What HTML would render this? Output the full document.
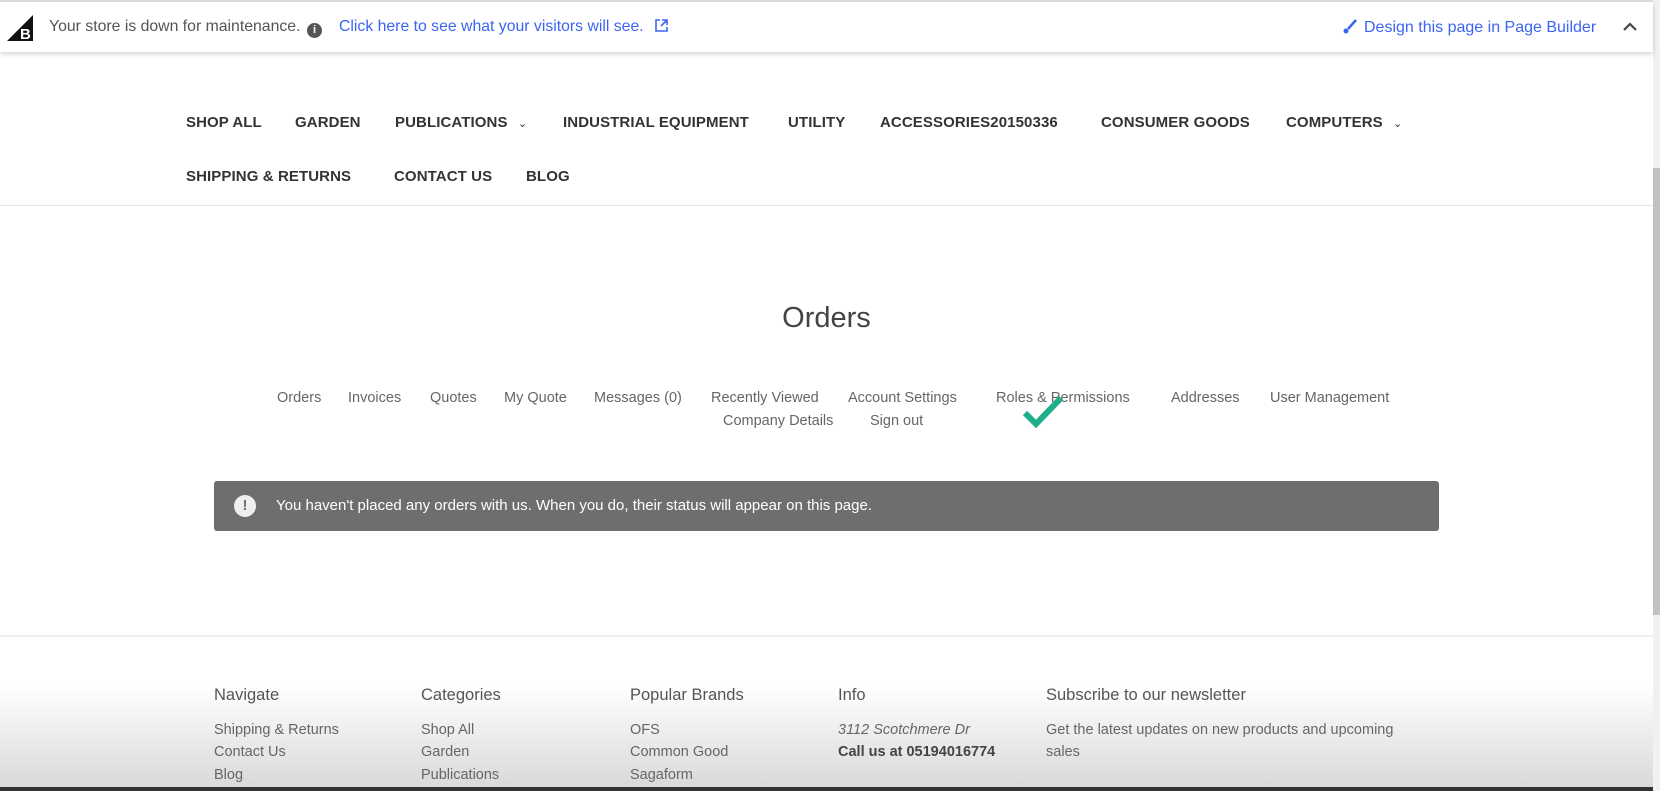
<!DOCTYPE html>
<html><head><meta charset="utf-8"><style>
*{margin:0;padding:0;box-sizing:border-box}
body{width:1660px;height:791px;overflow:hidden;background:#fff;font-family:"Liberation Sans",sans-serif;position:relative}
.a{position:absolute;white-space:nowrap}
.top{position:absolute;left:0;top:2px;width:1653px;height:50px;background:#fff;box-shadow:0 2px 5px rgba(0,0,0,.18)}
.nav{font-weight:bold;font-size:15px;color:#333;letter-spacing:.1px}
.acc{font-size:14.5px;color:#666}
.ft{font-size:16.5px;color:#555}
.fl{font-size:14.5px;color:#666}
</style></head><body>
<div class="a" style="left:0;top:0;width:1660px;height:2px;background:#ddd"></div>
<div class="a" style="left:0;top:636px;width:1653px;height:155px;background:linear-gradient(#fff 0,#fff 50px,#ececec 100px,#d8d8d8 155px)"></div>
<div class="a" style="left:0;top:635px;width:1653px;height:2px;background:#eee"></div>
<div class="a" style="left:1653px;top:0;width:7px;height:791px;background:#f1f1f1"></div>
<div class="a" style="left:1653px;top:168px;width:7px;height:447px;background:#c1c1c1"></div>
<div class="a" style="left:0;top:787px;width:1653px;height:4px;background:#333"></div>
<div class="top">
 <svg class="a" style="left:7px;top:9px" width="30" height="30" viewBox="0 0 30 30"><path d="M0 30 L26 4 L26 30Z" fill="#111"/><text x="13" y="28" font-size="15" font-weight="bold" fill="#fff" font-family="Liberation Sans">B</text></svg>
 <div class="a" style="left:49px;top:16px;font-size:15.8px;color:#555">Your store is down for maintenance.</div>
 <div class="a" style="left:307px;top:21px;width:15px;height:15px;border-radius:50%;background:#555;color:#fff;font-size:11px;font-weight:bold;text-align:center;line-height:15px">i</div>
 <div class="a" style="left:339px;top:16px;font-size:15.8px;color:#3c64f4">Click here to see what your visitors will see.</div>
 <svg class="a" style="left:654px;top:16px" width="15" height="15" viewBox="0 0 15 15"><path d="M6 2H2v11h11V9M8 2h5v5M13 2L7 8" stroke="#3c64f4" stroke-width="1.6" fill="none"/></svg>
 <svg class="a" style="left:1342px;top:17px" width="16" height="16" viewBox="0 0 16 16"><path d="M14 1L6 10" stroke="#3c64f4" stroke-width="2.5"/><circle cx="4" cy="12" r="2.5" fill="#3c64f4"/></svg>
 <div class="a" style="left:1364px;top:17px;font-size:16px;color:#3c64f4">Design this page in Page Builder</div>
 <svg class="a" style="left:1622px;top:19px" width="16" height="12" viewBox="0 0 16 12"><path d="M2 9L8 3L14 9" stroke="#444" stroke-width="2.2" fill="none"/></svg>
</div>
<div class="a nav" style="left:186px;top:114px">SHOP ALL</div>
<div class="a nav" style="left:295px;top:114px">GARDEN</div>
<div class="a nav" style="left:395px;top:114px">PUBLICATIONS <span style="font-weight:normal;font-size:11px;margin-left:6px">&#8964;</span></div>
<div class="a nav" style="left:563px;top:114px">INDUSTRIAL EQUIPMENT</div>
<div class="a nav" style="left:788px;top:114px">UTILITY</div>
<div class="a nav" style="left:880px;top:114px">ACCESSORIES20150336</div>
<div class="a nav" style="left:1101px;top:114px">CONSUMER GOODS</div>
<div class="a nav" style="left:1286px;top:114px">COMPUTERS <span style="font-weight:normal;font-size:11px;margin-left:6px">&#8964;</span></div>
<div class="a nav" style="left:186px;top:168px">SHIPPING &amp; RETURNS</div>
<div class="a nav" style="left:394px;top:168px">CONTACT US</div>
<div class="a nav" style="left:526px;top:168px">BLOG</div>
<div class="a" style="left:0;top:205px;width:1653px;height:1px;background:#e5e5e5"></div>
<div class="a" style="left:0;top:302px;width:1653px;text-align:center;font-size:29px;color:#444">Orders</div>
<div class="a acc" style="left:277px;top:390px">Orders</div>
<div class="a acc" style="left:348px;top:390px">Invoices</div>
<div class="a acc" style="left:430px;top:390px">Quotes</div>
<div class="a acc" style="left:504px;top:390px">My Quote</div>
<div class="a acc" style="left:594px;top:390px">Messages (0)</div>
<div class="a acc" style="left:711px;top:390px">Recently Viewed</div>
<div class="a acc" style="left:848px;top:390px">Account Settings</div>
<div class="a acc" style="left:996px;top:390px">Roles &amp; Permissions</div>
<div class="a acc" style="left:1171px;top:390px">Addresses</div>
<div class="a acc" style="left:1270px;top:390px">User Management</div>
<div class="a acc" style="left:723px;top:413px">Company Details</div>
<div class="a acc" style="left:870px;top:413px">Sign out</div>
<svg class="a" style="left:1022px;top:395px" width="42" height="34" viewBox="0 0 42 34"><path d="M3 18L14 29L39 3" stroke="#1fae8a" stroke-width="6" fill="none"/></svg>
<div class="a" style="left:214px;top:481px;width:1225px;height:50px;background:#6e6e6e;border-radius:3px"></div>
<div class="a" style="left:234px;top:495px;width:22px;height:22px;border-radius:50%;background:#eee;color:#6e6e6e;font-weight:bold;font-size:15px;text-align:center;line-height:22px">!</div>
<div class="a" style="left:276px;top:497px;font-size:15px;color:#fff">You haven't placed any orders with us. When you do, their status will appear on this page.</div>
<div class="a ft" style="left:214px;top:686px">Navigate</div>
<div class="a ft" style="left:421px;top:686px">Categories</div>
<div class="a ft" style="left:630px;top:686px">Popular Brands</div>
<div class="a ft" style="left:838px;top:686px">Info</div>
<div class="a ft" style="left:1046px;top:686px">Subscribe to our newsletter</div>
<div class="a fl" style="left:214px;top:722px">Shipping &amp; Returns</div>
<div class="a fl" style="left:214px;top:744px">Contact Us</div>
<div class="a fl" style="left:214px;top:767px">Blog</div>
<div class="a fl" style="left:421px;top:722px">Shop All</div>
<div class="a fl" style="left:421px;top:744px">Garden</div>
<div class="a fl" style="left:421px;top:767px">Publications</div>
<div class="a fl" style="left:630px;top:722px">OFS</div>
<div class="a fl" style="left:630px;top:744px">Common Good</div>
<div class="a fl" style="left:630px;top:767px">Sagaform</div>
<div class="a fl" style="left:838px;top:722px;font-style:italic">3112 Scotchmere Dr</div>
<div class="a fl" style="left:838px;top:744px;font-weight:bold;color:#444">Call us at 05194016774</div>
<div class="a fl" style="left:1046px;top:722px">Get the latest updates on new products and upcoming</div>
<div class="a fl" style="left:1046px;top:744px">sales</div>
</body></html>
